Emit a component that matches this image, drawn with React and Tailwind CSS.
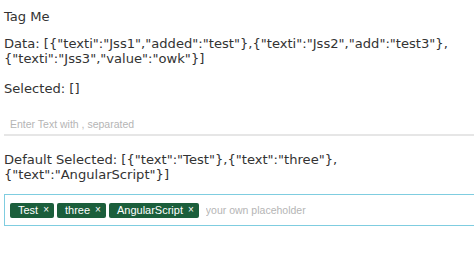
import React, { useState } from 'react'

const data = [
  { texti: 'Jss1', added: 'test' },
  { texti: 'Jss2', add: 'test3' },
  { texti: 'Jss3', value: 'owk' },
]

const defaults = [{ text: 'Test' }, { text: 'three' }, { text: 'AngularScript' }]

const Tag = ({ text, onRemove }) => (
  <span className="inline-flex h-[15px] items-center rounded-[2px] bg-[#1b5e3b] pl-[8px] pr-[5px] text-[11px] leading-none text-white">
    {text}
    <button onClick={onRemove} className="ml-[5px] text-[10px] leading-none text-white">
      ×
    </button>
  </span>
)

const App = () => {
  const [selected, setSelected] = useState([])
  const [tags, setTags] = useState(defaults)

  return (
    <div className="overflow-hidden pl-[4px] pt-[9px] font-['DejaVu_Sans',sans-serif] text-[13.1px] leading-[15px] text-[#333]">
      <div>Tag Me</div>

      <p className="mt-[12px]">Data: {JSON.stringify(data)}</p>

      <p className="mt-[15px]">Selected: {JSON.stringify(selected)}</p>

      <input
        type="text"
        placeholder="Enter Text with , separated"
        onKeyDown={(e) => {
          if (e.key === 'Enter' && e.target.value) {
            setSelected(e.target.value.split(',').map((t) => ({ text: t.trim() })))
            e.target.value = ''
          }
        }}
        className="mt-[18px] block h-[22px] w-[490px] border-b-2 border-[#e6e6e6] pl-[6px] font-['Liberation_Sans',Arial,sans-serif] text-[10.5px] outline-none placeholder:text-[#b5b5b5]"
      />

      <p className="mt-[16px]">Default Selected: {JSON.stringify(tags)}</p>

      <div className="mt-[12px] flex h-[32px] w-[490px] items-center gap-[3px] border-[1.5px] border-[#7fcde0] pl-[5px] font-['Liberation_Sans',Arial,sans-serif]">
        {tags.map((t, i) => (
          <Tag key={t.text} text={t.text} onRemove={() => setTags(tags.filter((_, j) => j !== i))} />
        ))}
        <input
          type="text"
          placeholder="your own placeholder"
          className="ml-[4px] flex-1 text-[10.5px] outline-none placeholder:text-[#b5b5b5]"
        />
      </div>
    </div>
  )
}

export default App
